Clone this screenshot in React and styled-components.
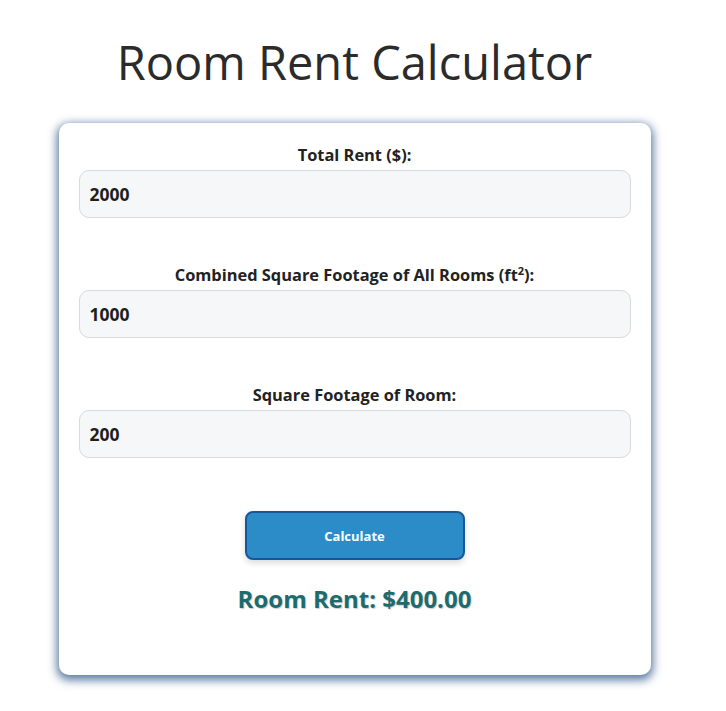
import React, { useState } from "react";
import styled, { createGlobalStyle } from "styled-components";

const Global = createGlobalStyle`
  body {
    margin: 0;
    background: #ffffff;
    font-family: "Open Sans", "Noto Sans", sans-serif;
  }
`;

const Page = styled.div`
  display: flex;
  flex-direction: column;
  align-items: center;
  padding: 30px 17px 35px 0;
`;

const Title = styled.h1`
  margin: 0;
  font-size: 47px;
  font-weight: 400;
  color: #2b2b2b;
  line-height: 64px;
`;

const Card = styled.div`
  margin-top: 29px;
  width: 592px;
  box-sizing: border-box;
  padding: 22px 20px 60px;
  background: #fff;
  border-radius: 10px;
  box-shadow: 0 3px 10px 2px rgba(35, 75, 130, 0.75);
  display: flex;
  flex-direction: column;
  align-items: center;
`;

const Field = styled.div`
  width: 100%;
  display: flex;
  flex-direction: column;
  align-items: center;
  margin-bottom: ${(p) => (p.$last ? "53px" : "47px")};
`;

const Label = styled.label`
  font-size: 16.4px;
  font-weight: 700;
  color: #222;
  line-height: 20px;
  margin-bottom: 5px;
  sup {
    font-size: 11px;
    line-height: 0;
  }
`;

const Input = styled.input`
  width: 100%;
  box-sizing: border-box;
  height: 48px;
  padding: 0 10px;
  font-family: inherit;
  font-size: 17.5px;
  font-weight: 700;
  color: #1e1e1e;
  background: #f6f7f9;
  border: 1px solid #d9d9d9;
  border-radius: 10px;
  outline: none;
`;

const Button = styled.button`
  width: 220px;
  height: 49px;
  background: #2b8cc8;
  border: 2px solid #16569a;
  border-radius: 8px;
  color: #fff;
  font-family: inherit;
  font-size: 13px;
  font-weight: 700;
  box-shadow: 0 3px 6px rgba(0, 0, 0, 0.15);
  cursor: pointer;
`;

const Result = styled.div`
  margin-top: 22px;
  font-size: 24px;
  font-weight: 700;
  color: #1d6b6e;
  text-shadow: 1px 1px 1px rgba(0, 0, 0, 0.2);
`;

export default function App() {
  const [total, setTotal] = useState("2000");
  const [combined, setCombined] = useState("1000");
  const [room, setRoom] = useState("200");
  const [result, setResult] = useState(400);

  const calc = () => {
    const t = parseFloat(total), c = parseFloat(combined), r = parseFloat(room);
    if (c > 0) setResult((t * r) / c);
  };

  return (
    <Page>
      <Global />
      <Title>Room Rent Calculator</Title>
      <Card>
        <Field>
          <Label>Total Rent ($):</Label>
          <Input value={total} onChange={(e) => setTotal(e.target.value)} />
        </Field>
        <Field>
          <Label>
            Combined Square Footage of All Rooms (ft<sup>2</sup>):
          </Label>
          <Input value={combined} onChange={(e) => setCombined(e.target.value)} />
        </Field>
        <Field $last>
          <Label>Square Footage of Room:</Label>
          <Input value={room} onChange={(e) => setRoom(e.target.value)} />
        </Field>
        <Button onClick={calc}>Calculate</Button>
        <Result>Room Rent: ${result.toFixed(2)}</Result>
      </Card>
    </Page>
  );
}
